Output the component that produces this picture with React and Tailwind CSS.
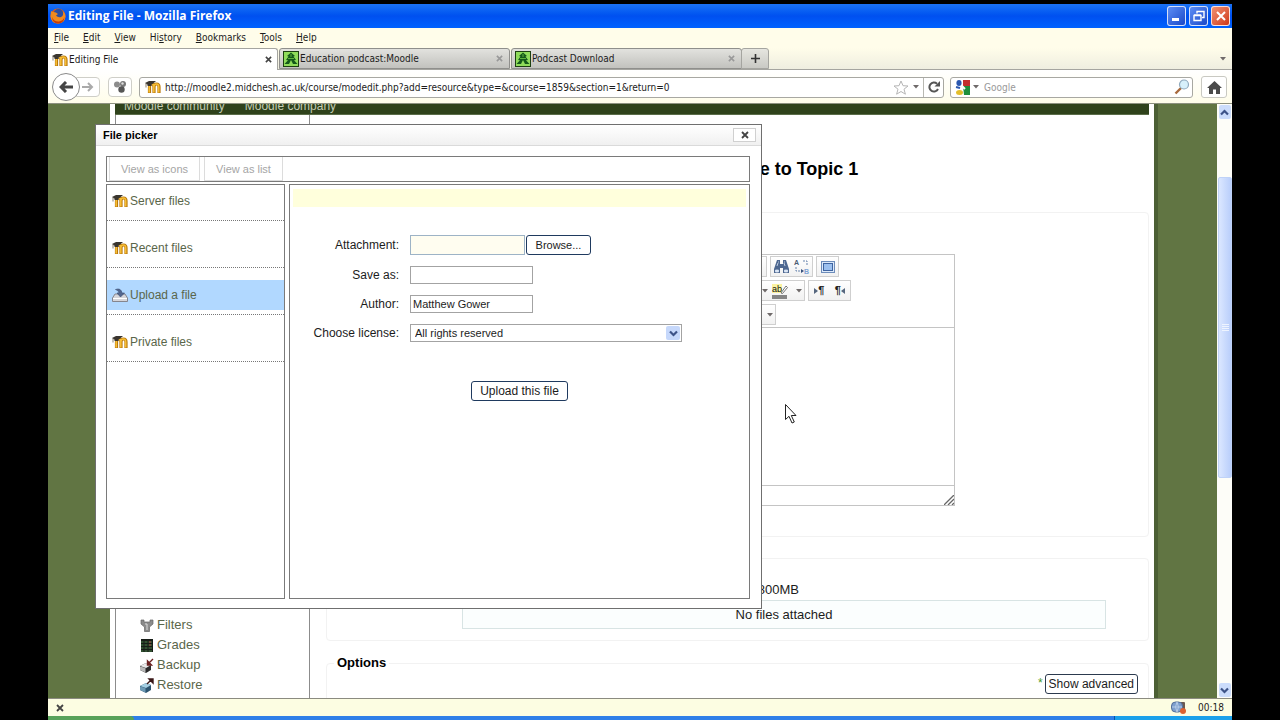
import React, { useState } from 'react';

const menus = ['File', 'Edit', 'View', 'History', 'Bookmarks', 'Tools', 'Help'];
const accessKeys = { File: 0, Edit: 0, View: 0, History: 2, Bookmarks: 0, Tools: 0, Help: 0 };

const repositories = [
  { id: 'server', name: 'Server files', icon: 'moodle' },
  { id: 'recent', name: 'Recent files', icon: 'moodle' },
  { id: 'upload', name: 'Upload a file', icon: 'upload' },
  { id: 'private', name: 'Private files', icon: 'moodle' },
];

const licenses = ['All rights reserved', 'Public Domain', 'Creative Commons'];

/* ---------- ICONS ---------- */

function MoodleIcon() {
  return (
    <svg width="16" height="14" viewBox="0 0 16 14" className="shrink-0">
      <path d="M4.500 13V7Q4.500 4 6.700 4T9 7V13M9 7Q9 4 11.500 4T14 7V13" fill="none" stroke="#b9780c" strokeWidth="3.200" />
      <path d="M4.200 12.500V7Q4.200 4 6.500 4T8.800 7V12.500M8.800 7Q8.800 4 11.300 4T13.700 7V12.500" fill="none" stroke="#f6bd34" strokeWidth="1.600" />
      <path d="M0 3 4 1h7L7 4.500H2z" fill="#39352f" />
      <path d="M2.500 4h4v2h-4z" fill="#39352f" />
      <path d="M1 3.500v4" stroke="#8b8170" strokeWidth="1" />
    </svg>
  );
}

function FirefoxIcon() {
  return (
    <svg width="16" height="16" viewBox="0 0 16 16" className="shrink-0">
      <circle cx="8" cy="8" r="7.5" fill="#e2600f" />
      <circle cx="8.5" cy="6" r="5" fill="#2d4f9e" />
      <path d="M1 3q1 1 2.500 1Q6 4 8 6L6 7.500Q8 10 11 9q3-1 2-6 3 3 2.500 6-1 6-7.500 6.500Q1 15 .5 8.500z" fill="#f08a1d" />
      <path d="M2 9q2 5 7 4.500 4-.5 5.500-4.500Q14 15 8 15.500 2.500 15 2 9z" fill="#c53c08" />
    </svg>
  );
}

function TreeIcon() {
  return (
    <svg width="16" height="16" viewBox="0 0 16 16" className="shrink-0">
      <rect x=".5" y=".5" width="15" height="15" fill="#8fdc5a" stroke="#1d3f12" />
      <path d="M8 1.500 12 5l-1.500.5L13 9l-2 .2L14.500 13H10l-2-4-2 4H1.500L5 9.200 3 9l2.500-3.500L4 5z" fill="#14591a" />
      <path d="M5 7.500h6M8 3v3" stroke="#5fb23c" />
    </svg>
  );
}

function UploadIcon() {
  return (
    <svg width="16" height="14" viewBox="0 0 16 14" className="shrink-0">
      <path d="M3 6h10l2.500 4v3.500H.5V10z" fill="#d5d5da" stroke="#85858d" />
      <path d="M1 10.500h14" stroke="#fff" />
      <path d="M3.500 1.500Q9-.5 10 5h2.500L8.500 9 5 5h2Q7 2.500 3.500 1.500z" fill="#53678f" stroke="#394a70" strokeWidth=".6" />
    </svg>
  );
}

function Cross({ color = '#444', size = 7 }) {
  return (
    <svg width={size} height={size} viewBox="0 0 8 8">
      <path d="M1 1l6 6M7 1 1 7" stroke={color} strokeWidth="1.8" />
    </svg>
  );
}

function DownArrow() {
  return (
    <svg width="6" height="4" viewBox="0 0 6 4" className="shrink-0">
      <path d="M0 0h6L3 3.500z" fill="#6f6a6a" />
    </svg>
  );
}

function Chevron({ up }) {
  return (
    <svg width="9" height="7" viewBox="0 0 9 7" className={up ? 'rotate-180' : ''}>
      <path d="M1 1.500 4.500 5 8 1.500" fill="none" stroke="#3d5388" strokeWidth="2.200" />
    </svg>
  );
}

function FiltersIcon() {
  return (
    <svg width="14" height="14" viewBox="0 0 14 14">
      <path d="M1 2h3v2h6V2h3v4L9.500 9v4.500h-5V9L1 6z" fill="#8b8b8b" stroke="#666" strokeWidth=".7" />
      <path d="M5 6h2v6" stroke="#ddd" fill="none" />
    </svg>
  );
}

function GradesIcon() {
  return (
    <svg width="14" height="14" viewBox="0 0 14 14">
      <rect x="1" y="1" width="12" height="13" fill="#161c16" />
      <path d="M1 4h11M1 7h11M1 10h11M1 13h11" stroke="#4c834c" />
      <path d="M4 1v13M8 1v13" stroke="#161c16" />
      <path d="M9 4h2M9 7h2" stroke="#b04747" />
    </svg>
  );
}

function BoxIcon({ restore }) {
  return (
    <svg width="14" height="15" viewBox="0 0 14 15">
      <path d="M0 8l6-3 5 2v5l-5 3-6-3z" fill={restore ? '#2e5570' : '#2b2b2b'} />
      <path d="M0 8l6-3 5 2-5 3z" fill={restore ? '#a4cfe3' : '#e9e9e9'} />
      <path d="M0 8.500v3.500l5.500 2.500V10z" fill={restore ? '#6d9ab5' : '#b9b9b9'} />
      {restore ? (
        <path d="M7 6l4-4M9 1h4v4z" stroke="#3a1717" strokeWidth="1.400" fill="#3a1717" />
      ) : (
        <path d="M13 1 9.500 4.500M7.500 3v4h4z" stroke="#6b2020" strokeWidth="1.400" fill="#6b2020" />
      )}
    </svg>
  );
}

const adminLinks = [
  { name: 'Filters', icon: <FiltersIcon /> },
  { name: 'Grades', icon: <GradesIcon /> },
  { name: 'Backup', icon: <BoxIcon /> },
  { name: 'Restore', icon: <BoxIcon restore /> },
];

/* ---------- BROWSER CHROME ---------- */

function TitleBar() {
  const base = 'flex h-5 w-[19px] items-center justify-center rounded-[3px] border border-white/80';
  return (
    <header className="flex h-6 shrink-0 items-center bg-linear-to-b from-[#1b72f5] via-[#0050f0] to-[#0062ff] px-[2px]">
      <FirefoxIcon />
      <h1 className="ml-[2px] flex-1 font-['Open_Sans',sans-serif] text-[12px] font-bold text-white">
        Editing File - Mozilla Firefox
      </h1>
      <div className="flex gap-[3px]">
        <button aria-label="Minimize" className={`${base} bg-linear-to-br from-[#5d8df5] to-[#1c48c8]`}>
          <svg width="12" height="12"><path d="M1 9.500h7" stroke="#fff" strokeWidth="3" /></svg>
        </button>
        <button aria-label="Restore" className={`${base} bg-linear-to-br from-[#5d8df5] to-[#1c48c8]`}>
          <svg width="12" height="12" viewBox="0 0 12 12" fill="none" stroke="#fff">
            <path d="M4 3.500V1.500h7v6H9M1 5.500h7v5H1zM1 5h7M4 1.500h7" strokeWidth="1.400" />
          </svg>
        </button>
        <button aria-label="Close" className={`${base} bg-linear-to-br from-[#f08f70] to-[#cf3512]`}>
          <svg width="12" height="12"><path d="M2 2l8 8M10 2l-8 8" stroke="#fff" strokeWidth="2" /></svg>
        </button>
      </div>
    </header>
  );
}

function MenuBar() {
  return (
    <nav className="flex h-5 shrink-0 items-center gap-[14px] bg-[#fffdea] px-[6px]">
      {menus.map((menu) => {
        const k = accessKeys[menu];
        return (
          <button key={menu} className="leading-4">
            {menu.slice(0, k)}
            <span className="underline">{menu[k]}</span>
            {menu.slice(k + 1)}
          </button>
        );
      })}
    </nav>
  );
}

function InactiveTab({ title }) {
  return (
    <div className="flex w-[231px] items-center gap-px rounded-t-[3px] border border-[#8f8f8c] bg-linear-to-b from-[#e2e2de] to-[#c2c2be] pr-[6px] pl-[3px]">
      <TreeIcon />
      <button className="flex-1 text-left leading-4">{title}</button>
      <button aria-label="Close tab"><Cross color="#999" /></button>
    </div>
  );
}

function TabStrip() {
  return (
    <div className="flex h-[22px] shrink-0 gap-px border-b border-[#a5a5a0] bg-linear-to-b from-[#fffdea] to-[#efeee0]">
      <div className="-mb-px flex w-[230px] items-center gap-px rounded-tr-[3px] border-t border-r border-[#a5a5a0] bg-white pr-[5px] pl-1">
        <MoodleIcon />
        <button className="flex-1 text-left leading-4">Editing File</button>
        <button aria-label="Close tab"><Cross /></button>
      </div>
      <InactiveTab title="Education podcast:Moodle" />
      <InactiveTab title="Podcast Download" />
      <button aria-label="New tab" className="-ml-[2px] flex w-7 items-center justify-center rounded-t-[3px] border border-[#a5a5a0] bg-linear-to-b from-[#e6e6e0] to-[#c9c9c4]">
        <svg width="9" height="9"><path d="M4.500 0v9M0 4.500h9" stroke="#333" strokeWidth="1.600" /></svg>
      </button>
      <button aria-label="List all tabs" className="ml-auto px-[6px]"><DownArrow /></button>
    </div>
  );
}

function NavBar() {
  return (
    <div className="flex h-[34px] shrink-0 items-center border-b border-[#8d9180] bg-linear-to-b from-white to-[#fffdea] pt-px pr-[5px] pl-1">
      <button aria-label="Back" className="z-10 flex size-7 items-center justify-center rounded-full border border-[#8a8a8a] bg-white">
        <svg width="14" height="12" viewBox="0 0 14 12"><path d="M7 1 2 6l5 5M2 6h12" fill="none" stroke="#444" strokeWidth="3" /></svg>
      </button>
      <button aria-label="Forward" className="-ml-1 flex h-5 w-6 items-center justify-center rounded-r border border-[#cfcfc8] bg-white">
        <svg width="12" height="10" viewBox="0 0 12 10"><path d="M6 1l4 4-4 4M10 5H0" fill="none" stroke="#aaa" strokeWidth="2" /></svg>
      </button>
      <button aria-label="Add-on" className="ml-2 flex h-5 w-6 items-center justify-center rounded border border-[#cfcfc8] bg-white">
        <svg width="14" height="14" viewBox="0 0 14 14">
          <circle cx="4" cy="4.500" r="3" fill="#8c8c8c" />
          <circle cx="10" cy="4" r="3" fill="#777" />
          <circle cx="8.500" cy="9.500" r="3.200" fill="#555" />
          <circle cx="9.500" cy="3.500" r="1.200" fill="#ddd" />
        </svg>
      </button>
      <div className="ml-[7px] flex h-[21px] flex-1 items-center rounded-[3px] border border-[#a8a8a2] bg-white pl-[5px]">
        <MoodleIcon />
        <input
          aria-label="Address"
          defaultValue="http://moodle2.midchesh.ac.uk/course/modedit.php?add=resource&type=&course=1859&section=1&return=0"
          className="ml-1 h-4 min-w-0 flex-1 outline-none"
        />
        <button aria-label="Bookmark this page" className="flex items-center gap-1 px-1">
          <svg width="16" height="15" viewBox="0 0 16 15">
            <path d="M8 1l2 4.700 5 .3-4 3.200 1.400 5L8 11.500l-4.400 2.700L5 9.200 1 6l5-.3z" fill="#fff" stroke="#b5b5b5" />
          </svg>
          <DownArrow />
        </button>
        <button aria-label="Reload" className="flex h-full w-5 items-center justify-center border-l border-[#b8b8b2]">
          <svg width="12" height="12" viewBox="0 0 12 12">
            <path d="M10 8A4.500 4.500 0 1 1 9 2.800" fill="none" stroke="#555" strokeWidth="2" />
            <path d="M6.500 5.500H12V0z" fill="#555" />
          </svg>
        </button>
      </div>
      <div className="ml-[6px] flex h-[21px] w-[243px] items-center rounded-[3px] border border-[#a8a8a2] bg-white pr-[2px] pl-1">
        <svg width="15" height="15" viewBox="0 0 15 15" className="shrink-0">
          <path d="M8 0h7v6H8z" fill="#c22f2f" />
          <path d="M8 6h7v9H9z" fill="#1d8f3c" />
          <ellipse cx="4" cy="3" rx="2.600" ry="3" fill="#2a57b0" />
          <ellipse cx="4.500" cy="12.500" rx="3.500" ry="2.500" fill="#e3bd2a" />
          <path d="M1 7l4 1" stroke="#2a57b0" strokeWidth="2" />
          <path d="M7 6l3 3" stroke="#fff" strokeWidth="2" />
        </svg>
        <span className="ml-[3px]"><DownArrow /></span>
        <input aria-label="Search" placeholder="Google" className="ml-[5px] h-4 min-w-0 flex-1 outline-none placeholder:text-[#999]" />
        <button aria-label="Go">
          <svg width="16" height="16" viewBox="0 0 16 16">
            <path d="M1.500 14.500 7 9" stroke="#a8693d" strokeWidth="2.400" />
            <circle cx="10" cy="5.500" r="4.500" fill="#d7f0fb" stroke="#8fa9bd" strokeWidth="1.200" />
          </svg>
        </button>
      </div>
      <button aria-label="Home" className="ml-2 flex h-[22px] w-[26px] items-center justify-center rounded-[3px] border border-[#c9c9c2] bg-white">
        <svg width="15" height="13" viewBox="0 0 15 13">
          <path d="M7.500 0 15 7h-2v6H9V8.500H6V13H2V7H0z" fill="#4a4a4a" />
        </svg>
      </button>
    </div>
  );
}

function StatusBar() {
  return (
    <footer className="shrink-0">
      <div className="flex h-[18px] items-center border-t border-[#8b8b80] bg-[#fcfde2] px-2">
        <button aria-label="Close add-on bar"><Cross size={8} /></button>
        <svg width="15" height="13" viewBox="0 0 15 13" className="ml-auto">
          <rect x="5" y="1" width="9" height="10" rx="1" fill="#6b5a50" />
          <rect x=".5" y="1" width="11" height="10" rx="4" fill="#7d9fce" stroke="#55709a" />
          <path d="M1 6h10M6 1q-3 5 0 10M6 1q3 5 0 10" fill="none" stroke="#b4cae6" />
          <circle cx="12" cy="10" r="3" fill="#dd6230" />
        </svg>
        <span className="ml-3">00:18</span>
      </div>
      <div className="flex h-1 bg-[#2f7fe8]">
        <div className="w-[86px] rounded-tr bg-[#58a25a]" />
        <div className="ml-auto w-[118px] border-l border-[#0c4fa8] bg-[#1aa0ea]" />
      </div>
    </footer>
  );
}

function Scrollbar() {
  return (
    <div className="flex w-[15px] shrink-0 flex-col items-center bg-[#fdfdf8] py-px">
      <button aria-label="Scroll up" className="flex h-[14px] w-3 items-center justify-center rounded-[2px] bg-[#cbdcfb]"><Chevron up /></button>
      <div className="flex w-full flex-1 flex-col">
        <div className="h-[58px]" />
        <div className="ml-px flex h-[301px] items-center justify-center rounded-[2px] border border-[#bfd2f8] bg-linear-to-r from-[#dbe7ff] to-[#b9cefb]">
          <svg width="7" height="7"><path d="M0 .5h7M0 2.500h7M0 4.500h7M0 6.500h7" stroke="#eef4ff" /></svg>
        </div>
      </div>
      <button aria-label="Scroll down" className="flex h-[14px] w-3 items-center justify-center rounded-[2px] bg-[#cbdcfb]"><Chevron /></button>
    </div>
  );
}

/* ---------- COURSE PAGE ---------- */

function ToolGroup({ className = '', children }) {
  return (
    <div className={`flex h-[21px] items-center border border-[#cfcfcf] bg-linear-to-b from-white to-[#f1f1f1] ${className}`}>
      {children}
    </div>
  );
}

function Editor() {
  return (
    <div className="ml-[134px] flex h-[252px] w-[494px] flex-col border border-[#c4c4c4] bg-white">
      <div className="flex h-[73px] flex-col gap-[3px] border-b border-[#c4c4c4] pt-px">
        <div className="flex gap-[3px]">
          <ToolGroup className="w-[305px]" />
          <ToolGroup className="w-[43px] justify-around">
            <button aria-label="Find">
              <svg width="15" height="15" viewBox="0 0 15 15">
                <path d="M3 1h3v4h3V1h3l3 9v4H9v-5H6v5H0v-4z" fill="#4d6790" />
                <path d="M1.500 11h3v2h-3zM10.500 11h3v2h-3zM4 3h1M10 3h1M3 7l1-3M11 7l-1-3" fill="#dbe6f5" stroke="#dbe6f5" strokeWidth=".8" />
              </svg>
            </button>
            <button aria-label="Find and replace">
              <svg width="16" height="16" viewBox="0 0 16 16" className="overflow-visible font-['Liberation_Sans',sans-serif] text-[7px] font-bold">
                <text x="0" y="6" fill="#4a5a74">A</text>
                <text x="10" y="15" fill="#7ea3d4">B</text>
                <path d="M2 8v4h6M9 2h4v4" fill="none" stroke="#6683ad" strokeDasharray="2 1" />
                <path d="M7 10l3 2-3 2z" fill="#35507d" />
              </svg>
            </button>
          </ToolGroup>
          <ToolGroup className="w-[23px] justify-center">
            <button aria-label="Fullscreen">
              <svg width="14" height="12" viewBox="0 0 14 12">
                <rect x=".5" y=".5" width="13" height="11" fill="#dce9fa" stroke="#6d8cba" />
                <rect x="2.500" y="2.500" width="9" height="7" fill="#9cc0ef" stroke="#3f64a0" />
              </svg>
            </button>
          </ToolGroup>
        </div>
        <div className="flex gap-[3px]">
          <ToolGroup className="w-[343px] justify-end gap-1 pr-[2px]">
            <DownArrow />
            <button aria-label="Background color">
              <svg width="16" height="16" viewBox="0 0 16 16" className="overflow-visible font-['Liberation_Sans',sans-serif] text-[9px]">
                <rect y="1" width="10" height="9" fill="#fbf3a0" />
                <text x="0" y="9" fill="#111">ab</text>
                <path d="M9 10l5-7 1.500 1.500-5 6z" fill="#fff" stroke="#555" strokeWidth=".8" />
                <rect y="12" width="15" height="4" fill="#858585" />
              </svg>
            </button>
            <span className="ml-1"><DownArrow /></span>
          </ToolGroup>
          <ToolGroup className="w-[43px] justify-around text-[11px] font-bold text-[#222]">
            <button aria-label="Left to right" className="flex items-center">
              <svg width="4" height="6"><path d="M0 0l4 3-4 3z" fill="#56677f" /></svg>¶
            </button>
            <button aria-label="Right to left" className="flex items-center">
              ¶<svg width="4" height="6"><path d="M4 0 0 3l4 3z" fill="#56677f" /></svg>
            </button>
          </ToolGroup>
        </div>
        <ToolGroup className="w-[314px] justify-end pr-[2px]"><DownArrow /></ToolGroup>
      </div>
      <textarea aria-label="Description" className="w-full flex-1 resize-none outline-none" />
      <div className="flex h-5 items-end justify-end border-t border-[#c4c4c4]">
        <svg width="10" height="10"><path d="M0 10 10 0M4 10l6-6M8 10l2-2" stroke="#666" strokeWidth="1.300" /></svg>
      </div>
    </div>
  );
}

function CoursePage() {
  return (
    <div className="ml-[62px] flex min-w-0 flex-1 flex-col overflow-hidden border-r-4 border-[#4c5f35] bg-white px-[5px] font-['Liberation_Sans',Arial,sans-serif] text-[13px]">
      <div className="flex h-[11px] shrink-0 items-end gap-5 overflow-hidden border-b border-[#5b6d49] bg-[#2f421b] pl-[9px] text-[12px] leading-4 text-[#c3ccb4]">
        <a href="#community">Moodle community</a>
        <a href="#company">Moodle company</a>
      </div>
      <div className="flex min-h-0 flex-1">
        <aside className="w-[195px] shrink-0 border-x border-[#8c8c8c] pt-[500px] pl-6">
          <ul>
            {adminLinks.map((link) => (
              <li key={link.name} className="h-5">
                <a href={`#${link.name}`} className="flex items-center gap-[3px] leading-5 text-[#5a664a]">
                  {link.icon}
                  {link.name}
                </a>
              </li>
            ))}
          </ul>
        </aside>
        <main className="flex min-w-0 flex-1 flex-col pl-4">
          <h2 className="mt-10 text-center text-[18px] leading-7 font-bold text-black">Adding a new File to Topic 1</h2>
          <section className="mt-[29px] h-[325px] shrink-0 rounded border border-[#f2f2f2] pt-[41px]">
            <Editor />
          </section>
          <section className="mt-[21px] h-[83px] shrink-0 rounded border border-[#f2f2f2] pt-5 pr-[42px] pl-[135px]">
            <p className="w-[337px] text-right leading-[21px]">Maximum size for new files: 800MB</p>
            <p className="flex h-[29px] items-center justify-center border border-[#d8e4e4] bg-[#fbfefe]">No files attached</p>
          </section>
          <fieldset className="mt-3 h-[100px] shrink-0 rounded border border-[#f2f2f2] pr-[10px] pl-[7px]">
            <legend className="px-[3px] leading-5 font-bold text-black">Options</legend>
            <div className="mt-px flex justify-end gap-[2px]">
              <span className="text-[12px] text-[#4c9a2a]">*</span>
              <button className="h-5 rounded-[3px] border border-[#2c3a4e] bg-white px-[3px] text-[12px] leading-4">Show advanced</button>
            </div>
          </fieldset>
        </main>
      </div>
    </div>
  );
}

/* ---------- FILE PICKER ---------- */

function FilePicker() {
  const [active, setActive] = useState('upload');
  const [author, setAuthor] = useState('Matthew Gower');

  return (
    <div role="dialog" aria-labelledby="picker-title" className="absolute top-[20px] left-[47px] flex h-[485px] w-[667px] flex-col border border-[#6f6f6f] bg-white font-['Liberation_Sans',Arial,sans-serif] text-[12px]">
      <div className="flex h-[21px] shrink-0 items-center justify-between border-b border-[#dadada] bg-linear-to-b from-white to-[#f0f0f0] pr-[5px] pl-[7px]">
        <h2 id="picker-title" className="text-[11px] font-bold text-black">File picker</h2>
        <button aria-label="Close" className="flex h-[14px] w-[23px] items-center justify-center border border-[#d0d0d0] bg-white"><Cross size={8} /></button>
      </div>
      <div className="flex min-h-0 flex-1 flex-col gap-[2px] pt-[10px] pr-[11px] pb-[9px] pl-[10px]">
        <div className="flex h-[26px] shrink-0 gap-1 border border-[#7a7a7a] px-[2px] text-[11px] text-[#a5a5a5]">
          <button className="w-[91px] border border-t-0 border-[#dcdcdc] pt-[2px]">View as icons</button>
          <button className="w-[79px] border border-t-0 border-[#dcdcdc] pt-[2px]">View as list</button>
        </div>
        <div className="flex min-h-0 flex-1 gap-1">
          <ul className="w-[179px] shrink-0 border border-[#7a7a7a] pt-px">
            {repositories.map((repo) => (
              <li key={repo.id} className="mt-3 border-b border-dotted border-[#777] pb-1 first:mt-0">
                <button
                  onClick={() => setActive(repo.id)}
                  className={`flex h-[30px] w-full items-center gap-[2px] pl-[5px] text-left text-[#5a664a] ${active === repo.id ? 'bg-[#b1d8ff]' : ''}`}
                >
                  {repo.icon === 'upload' ? <UploadIcon /> : <MoodleIcon />}
                  {repo.name}
                </button>
              </li>
            ))}
          </ul>
          <div className="min-w-0 flex-1 border border-[#7a7a7a] pt-1">
            <div className="mx-[3px] h-[18px] bg-[#ffffdc]" />
            <form onSubmit={(e) => e.preventDefault()} className="mt-7">
              <div className="grid grid-cols-[109px_1fr] items-center gap-x-[11px] gap-y-[11px]">
                <label htmlFor="attachment" className="text-right">Attachment:</label>
                <div className="flex gap-px">
                  <input id="attachment" readOnly className="h-5 w-[115px] border border-[#9db3c6] bg-[#fffdf0]" />
                  <button type="button" className="h-5 w-[65px] rounded-[3px] border border-[#1f3a5f] bg-white text-[11px]">Browse...</button>
                </div>
                <label htmlFor="saveas" className="text-right">Save as:</label>
                <input id="saveas" className="h-[18px] w-[123px] border border-[#a3a3a3] px-[2px] text-[11px]" />
                <label htmlFor="author" className="text-right">Author:</label>
                <input id="author" value={author} onChange={(e) => setAuthor(e.target.value)} className="h-[18px] w-[123px] border border-[#a3a3a3] px-[2px] text-[11px]" />
                <label htmlFor="license" className="text-right">Choose license:</label>
                <div className="relative h-[18px] w-[272px]">
                  <select id="license" className="block h-full w-full appearance-none border border-[#a3a3a3] bg-white px-1 text-[11px]">
                    {licenses.map((l) => <option key={l}>{l}</option>)}
                  </select>
                  <span className="pointer-events-none absolute top-[2px] right-[2px] flex h-[14px] w-[14px] items-center justify-center rounded-[2px] bg-[#c6d8fb]"><Chevron /></span>
                </div>
              </div>
              <div className="mt-[39px] text-center">
                <button className="h-5 w-[97px] rounded-[3px] border border-[#1f3a5f] bg-white leading-4">Upload this file</button>
              </div>
            </form>
          </div>
        </div>
      </div>
    </div>
  );
}

function Cursor() {
  return (
    <svg width="12" height="20" viewBox="0 0 12 20" className="pointer-events-none absolute top-[300px] left-[737px]">
      <path d="M.5.5v15l3.500-3.200 3 6.700 2.300-1-3-6.500H11z" fill="#fff" stroke="#222" />
    </svg>
  );
}

export default function App() {
  return (
    <div className="flex h-screen flex-col bg-black px-12 pt-1 font-['DejaVu_Sans_Condensed','DejaVu_Sans',sans-serif] text-[10px] text-[#1c1c1c]">
      <TitleBar />
      <MenuBar />
      <TabStrip />
      <NavBar />
      <div className="relative flex min-h-0 flex-1 overflow-hidden bg-[#617543]">
        <CoursePage />
        <div className="w-[59px] shrink-0" />
        <Scrollbar />
        <FilePicker />
        <Cursor />
      </div>
      <StatusBar />
    </div>
  );
}
